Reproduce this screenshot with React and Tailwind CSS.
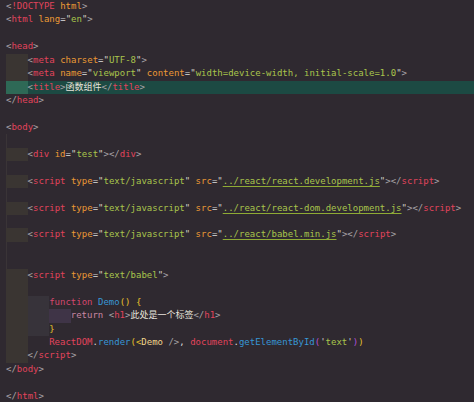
import React from "react";

const C = {
  P: "text-[#a8a4a8]",
  T: "text-[#e2445c]",
  A: "text-[#ec9a35]",
  E: "text-[#dcdcdc]",
  Q: "text-[#d4d4c8]",
  S: "text-[#a9c54c]",
  K: "text-[#d4476e]",
  B: "text-[#3797d6]",
  Y: "text-[#e8c12a]",
  R: "text-[#c987a4]",
  W: "text-[#dcdcdc]",
  V: "text-[#b552d9]",
  D: "text-[#f1d58c]",
  U: "text-[#a9c54c] underline decoration-[#8fab34] underline-offset-[2px]",
  Z: "text-[#e8e4dc]",
};

const open = (name) => [["<", "P"], [name, "T"]];
const close = (name) => [["</", "P"], [name, "T"], [">", "P"]];
const attr = (n, v, u) => [[" "], [n, "A"], ["=", "E"], ['"', "Q"], [v, u ? "U" : "S"], ['"', "Q"]];
const scriptSrc = (src) => [
  ...open("script"),
  ...attr("type", "text/javascript"),
  ...attr("src", src, true),
  [">", "P"],
  ...close("script"),
];

const lines = [
  { t: [["<", "P"], ["!DOCTYPE", "T"], [" "], ["html", "A"], [">", "P"]] },
  { t: [...open("html"), ...attr("lang", "en"), [">", "P"]] },
  { t: [] },
  { t: [...open("head"), [">", "P"]] },
  { ind: ["b"], t: [...open("meta"), ...attr("charset", "UTF-8"), [">", "P"]] },
  {
    ind: ["b"],
    t: [...open("meta"), ...attr("name", "viewport"), ...attr("content", "width=device-width, initial-scale=1.0"), [">", "P"]],
  },
  { ind: ["g"], hl: true, t: [...open("title"), [">", "P"], ["函数组件", "Z"], ...close("title")] },
  { t: close("head") },
  { t: [] },
  { t: [...open("body"), [">", "P"]] },
  { guide: true, t: [] },
  { ind: ["b"], t: [...open("div"), ...attr("id", "test"), [">", "P"], ...close("div")] },
  { guide: true, t: [] },
  { ind: ["b"], t: scriptSrc("../react/react.development.js") },
  { guide: true, t: [] },
  { ind: ["b"], t: scriptSrc("../react/react-dom.development.js") },
  { guide: true, t: [] },
  { ind: ["b"], t: scriptSrc("../react/babel.min.js") },
  { guide: true, t: [] },
  { guide: true, t: [] },
  { ind: ["b"], t: [...open("script"), ...attr("type", "text/babel"), [">", "P"]] },
  { ind: ["b"], t: [] },
  {
    ind: ["b", "c"],
    t: [["function", "K"], [" "], ["Demo", "B"], ["()", "Y"], [" "], ["{", "Y"]],
  },
  {
    ind: ["b", "c", "p"],
    t: [["return", "R"], [" "], ["<", "P"], ["h1", "T"], [">", "P"], ["此处是一个标签", "Z"], ...close("h1")],
  },
  { ind: ["b", "c"], t: [["}", "Y"]] },
  {
    ind: ["b", "c0"],
    t: [
      ["ReactDOM", "T"],
      [".", "W"],
      ["render", "B"],
      ["(", "Y"],
      ["<", "Y"],
      ["Demo", "D"],
      [" />", "P"],
      [",", "W"],
      [" "],
      ["document", "T"],
      [".", "W"],
      ["getElementById", "B"],
      ["(", "V"],
      ["'", "Q"],
      ["text", "S"],
      ["'", "Q"],
      [")", "V"],
      [")", "Y"],
    ],
  },
  { ind: ["b"], t: close("script") },
  { t: close("body") },
  { t: [] },
  { t: close("html") },
];

const indCls = {
  b: "bg-[#3a3532]",
  g: "bg-[#2e6956]",
  c: "bg-[#37333a]",
  c0: "bg-transparent",
  p: "bg-[#3f3447]",
};

export default function App() {
  return (
    <div className="w-[474px] h-[402px] overflow-hidden bg-[#2f2930] font-['DejaVu_Sans_Mono','Noto_Sans_CJK_SC',monospace] text-[9px]">
      {lines.map((ln, i) => (
        <div key={i} className="flex h-[13.44px] pl-[6px]">
          <div
            className={
              "flex flex-1 items-center whitespace-pre " +
              (ln.hl ? "bg-[#1c4a43] " : "") +
              (ln.guide ? "border-l border-[#3a3437]" : "")
            }
          >
            {(ln.ind || []).map((k, j) => (
              <span key={j} className={"inline-block self-stretch w-[21.6px] shrink-0 " + indCls[k]} />
            ))}
            <span className="leading-[13.44px]">
              {ln.t.map(([txt, c], j) => (
                <span key={j} className={c ? C[c] : ""}>
                  {txt}
                </span>
              ))}
            </span>
          </div>
        </div>
      ))}
    </div>
  );
}
